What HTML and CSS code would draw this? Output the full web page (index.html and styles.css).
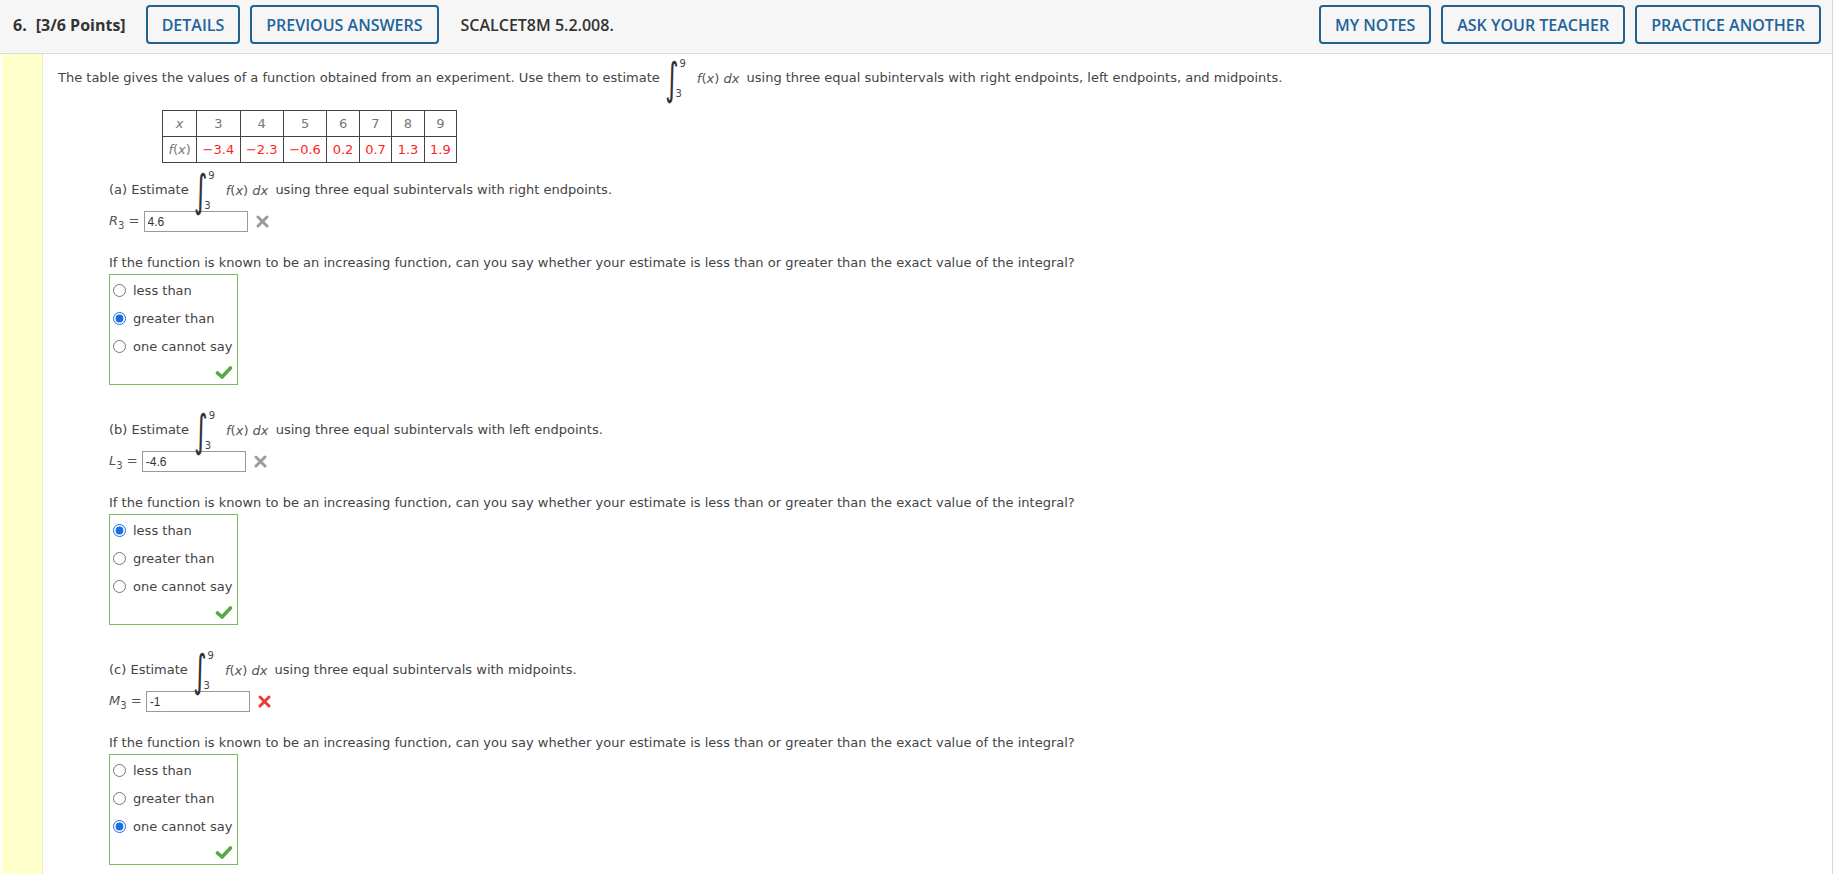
FILE: index.html
```html
<!DOCTYPE html>
<html lang="en">
<head>
    <meta charset="UTF-8">
    <title>SCALCET8M 5.2.008.</title>
    <link rel="stylesheet" href="styles.css">
</head>
<body>
<div class="page">
    <header class="q-header">
        <span class="q-num">6.</span>
        <span class="q-points">[3/6 Points]</span>
        <button class="q-btn">DETAILS</button>
        <button class="q-btn">PREVIOUS ANSWERS</button>
        <span class="q-code">SCALCET8M 5.2.008.</span>
        <div class="q-tools">
            <button class="q-btn">MY NOTES</button>
            <button class="q-btn">ASK YOUR TEACHER</button>
            <button class="q-btn">PRACTICE ANOTHER</button>
        </div>
    </header>

    <div class="q-body">
        <div class="stripe"></div>
        <div class="q-content">
            <div class="math-line">
                The table gives the values of a function obtained from an experiment. Use them to estimate
                <span class="integral">
                    <span class="int-sign">&int;</span>
                    <span class="limits"><span class="up">9</span><span class="low">3</span></span>
                    <span class="integrand"><i>f</i>(<i>x</i>) <i>dx</i></span>
                </span>
                using three equal subintervals with right endpoints, left endpoints, and midpoints.
            </div>

            <table class="values">
                <tr>
                    <td><i>x</i></td><td>3</td><td>4</td><td>5</td><td>6</td><td>7</td><td>8</td><td>9</td>
                </tr>
                <tr>
                    <td><i>f</i>(<i>x</i>)</td>
                    <td class="val">&minus;3.4</td><td class="val">&minus;2.3</td><td class="val">&minus;0.6</td>
                    <td class="val">0.2</td><td class="val">0.7</td><td class="val">1.3</td><td class="val">1.9</td>
                </tr>
            </table>

            <!-- part a -->
            <div class="part first">
                <div class="math-line">
                    (a) Estimate
                    <span class="integral">
                        <span class="int-sign">&int;</span>
                        <span class="limits"><span class="up">9</span><span class="low">3</span></span>
                        <span class="integrand"><i>f</i>(<i>x</i>) <i>dx</i></span>
                    </span>
                    using three equal subintervals with right endpoints.
                </div>
                <div class="answer-row">
                    <span class="var"><i>R</i><sub>3</sub></span> =
                    <input class="answer" type="text" value="4.6">
                    <svg class="mark" width="13" height="13" viewBox="0 0 13 13"><path d="M2 2 L11 11 M11 2 L2 11" stroke="#9c9c9c" stroke-width="3" stroke-linecap="round"/></svg>
                </div>
                <p class="question">If the function is known to be an increasing function, can you say whether your estimate is less than or greater than the exact value of the integral?</p>
                <div class="choices">
                    <label class="choice"><input type="radio" name="qa">less than</label>
                    <label class="choice"><input type="radio" name="qa" checked>greater than</label>
                    <label class="choice"><input type="radio" name="qa">one cannot say</label>
                    <div class="check">
                        <svg width="18" height="15" viewBox="0 0 18 15"><path d="M2.5 8 L7 12 L15.5 3" fill="none" stroke="#55a844" stroke-width="3.6" stroke-linecap="round" stroke-linejoin="round"/></svg>
                    </div>
                </div>
            </div>

            <!-- part b -->
            <div class="part">
                <div class="math-line">
                    (b) Estimate
                    <span class="integral">
                        <span class="int-sign">&int;</span>
                        <span class="limits"><span class="up">9</span><span class="low">3</span></span>
                        <span class="integrand"><i>f</i>(<i>x</i>) <i>dx</i></span>
                    </span>
                    using three equal subintervals with left endpoints.
                </div>
                <div class="answer-row">
                    <span class="var"><i>L</i><sub>3</sub></span> =
                    <input class="answer" type="text" value="-4.6">
                    <svg class="mark" width="13" height="13" viewBox="0 0 13 13"><path d="M2 2 L11 11 M11 2 L2 11" stroke="#9c9c9c" stroke-width="3" stroke-linecap="round"/></svg>
                </div>
                <p class="question">If the function is known to be an increasing function, can you say whether your estimate is less than or greater than the exact value of the integral?</p>
                <div class="choices">
                    <label class="choice"><input type="radio" name="qb" checked>less than</label>
                    <label class="choice"><input type="radio" name="qb">greater than</label>
                    <label class="choice"><input type="radio" name="qb">one cannot say</label>
                    <div class="check">
                        <svg width="18" height="15" viewBox="0 0 18 15"><path d="M2.5 8 L7 12 L15.5 3" fill="none" stroke="#55a844" stroke-width="3.6" stroke-linecap="round" stroke-linejoin="round"/></svg>
                    </div>
                </div>
            </div>

            <!-- part c -->
            <div class="part">
                <div class="math-line">
                    (c) Estimate
                    <span class="integral">
                        <span class="int-sign">&int;</span>
                        <span class="limits"><span class="up">9</span><span class="low">3</span></span>
                        <span class="integrand"><i>f</i>(<i>x</i>) <i>dx</i></span>
                    </span>
                    using three equal subintervals with midpoints.
                </div>
                <div class="answer-row">
                    <span class="var"><i>M</i><sub>3</sub></span> =
                    <input class="answer" type="text" value="-1">
                    <svg class="mark" width="13" height="13" viewBox="0 0 13 13"><path d="M2 2 L11 11 M11 2 L2 11" stroke="#ee3a3a" stroke-width="3" stroke-linecap="round"/></svg>
                </div>
                <p class="question">If the function is known to be an increasing function, can you say whether your estimate is less than or greater than the exact value of the integral?</p>
                <div class="choices">
                    <label class="choice"><input type="radio" name="qc">less than</label>
                    <label class="choice"><input type="radio" name="qc">greater than</label>
                    <label class="choice"><input type="radio" name="qc" checked>one cannot say</label>
                    <div class="check">
                        <svg width="18" height="15" viewBox="0 0 18 15"><path d="M2.5 8 L7 12 L15.5 3" fill="none" stroke="#55a844" stroke-width="3.6" stroke-linecap="round" stroke-linejoin="round"/></svg>
                    </div>
                </div>
            </div>
        </div>
    </div>
</div>
</body>
</html>
```

FILE: styles.css
```css
body {
    margin: 0;
    font-family: "DejaVu Sans", Verdana, sans-serif;
    font-size: 13px;
    color: #444;
    background: #fff;
}

.page {
    width: 1832px;
    border-right: 1px solid #d6d6d6;
}

/* question header bar */
.q-header {
    display: flex;
    align-items: center;
    height: 39px;
    padding: 5px 11px 9px 13px;
    background-color: #f6f6f6;
    border-bottom: 1px solid #dcdcdc;
    font-family: "Open Sans", sans-serif;
    font-size: 16px;
    color: #333;
}

.q-num {
    font-weight: 700;
    margin-right: 9px;
}

.q-points {
    font-weight: 700;
    margin-right: 10px;
}

.q-btn {
    height: 39px;
    padding: 0 14px;
    margin-left: 10px;
    font-family: "Open Sans", sans-serif;
    font-size: 16px;
    font-weight: 600;
    color: #1f649c;
    background: transparent;
    border: 2px solid #23628f;
    border-radius: 4px;
}

.q-code {
    font-weight: 600;
    margin-left: 22px;
}

.q-tools {
    display: flex;
    margin-left: auto;
}

.q-tools .q-btn:first-child {
    margin-left: 0;
}

/* question body */
.q-body {
    display: flex;
    min-height: 820px;
}

.stripe {
    width: 40px;
    margin-left: 2px;
    background-color: #ffffcc;
    border-right: 1px solid #ebebc4;
}

.q-content {
    flex: 1;
    padding: 9px 0 0 15px;
}

.math-line {
    height: 30px;
    line-height: 30px;
    white-space: nowrap;
}

.integral {
    display: inline-flex;
    align-items: center;
    height: 30px;
    vertical-align: middle;
    margin: 0 3px 0 1px;
}

.int-sign {
    display: inline-block;
    font-family: "DejaVu Sans", sans-serif;
    font-style: italic;
    font-size: 26px;
    line-height: 30px;
    color: #333;
    transform: scaleY(1.7);
}

.limits {
    display: flex;
    flex-direction: column;
    justify-content: space-between;
    height: 40px;
    font-size: 10px;
    line-height: 1;
    color: #444;
}

.limits .up {
    margin-left: 1px;
}

.limits .low {
    margin-left: -3px;
}

.integrand {
    margin-left: 11px;
    color: #555;
}

/* values table */
.values {
    margin: 17px 0 0 104px;
    border-collapse: collapse;
}

.values td {
    height: 25px;
    padding: 0 5.4px;
    border: 1px solid #444;
    text-align: center;
    color: #777;
}

.values .val {
    color: #f22;
}

/* answer parts */
.part {
    padding-left: 51px;
    margin-top: 30px;
}

.part.first {
    margin-top: 12px;
}

.answer-row {
    height: 22px;
    line-height: 22px;
    margin-top: 5px;
    color: #555;
    white-space: nowrap;
}

.var sub {
    font-size: 10px;
    line-height: 0;
}

.answer {
    box-sizing: border-box;
    width: 104px;
    height: 21px;
    margin: 0;
    padding: 0 3px;
    vertical-align: middle;
    border: 1px solid #9a9a9a;
    font-family: "Liberation Sans", Arial, sans-serif;
    font-size: 12px;
    color: #333;
}

.mark {
    margin-left: 4px;
    vertical-align: middle;
}

.question {
    margin: 23px 0 3px;
    line-height: 16px;
}

.choices {
    width: 127px;
    padding-top: 1px;
    border: 1px solid #7dba5e;
}

.choice {
    display: flex;
    align-items: center;
    height: 28px;
}

.choice input {
    width: 13px;
    height: 13px;
    margin: 0 7px 0 3px;
    accent-color: #1a6fe0;
}

.check {
    display: flex;
    justify-content: flex-end;
    align-items: center;
    height: 24px;
    padding-right: 4px;
}
```
